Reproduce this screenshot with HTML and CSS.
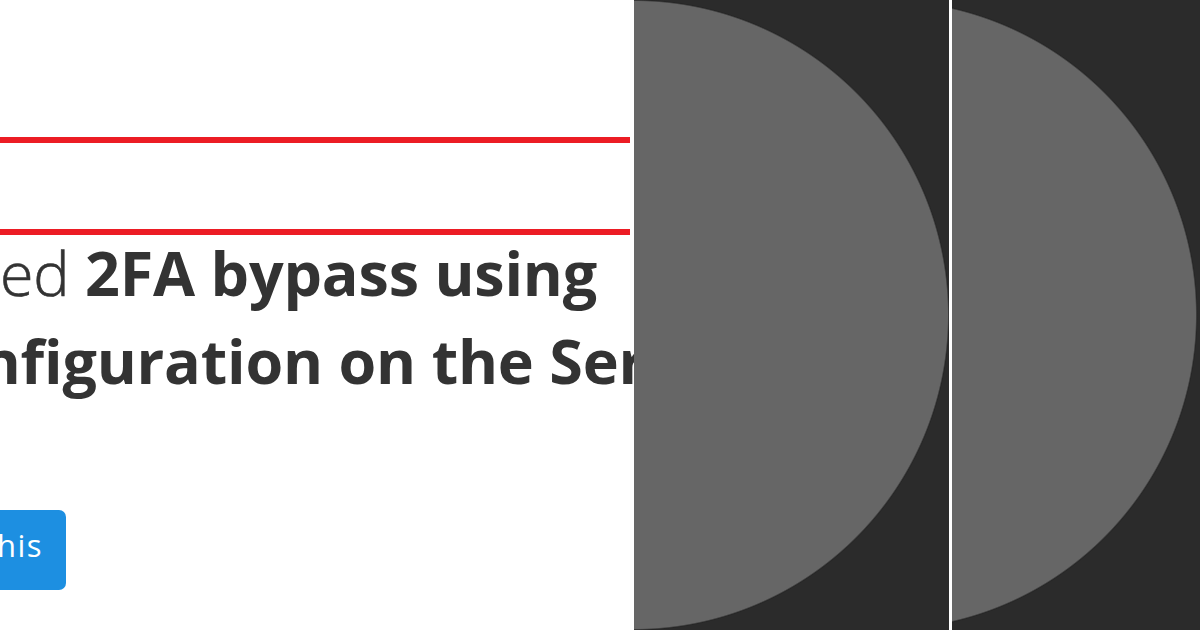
FILE: index.html
```html
<!DOCTYPE html>
<html lang="en">
<head>
<meta charset="UTF-8">
<title>2FA bypass using misconfiguration</title>
<link rel="stylesheet" href="styles.css">
</head>
<body>

<div class="article">
    <div class="rule first"></div>
    <div class="rule second"></div>

    <h1 class="title">
        <span class="line one"><span class="light">ed</span> 2FA bypass using</span>
        <span class="line two">configuration on the Server</span>
    </h1>

    <button class="share">Share this</button>
</div>

<div class="panel left"></div>
<div class="divider"></div>
<div class="panel right"></div>

</body>
</html>
```

FILE: styles.css
```css
body {
    margin: 0;
    width: 1200px;
    height: 630px;
    display: flex;
    overflow: hidden;
    background: #2b2b2b;
    font-family: 'Open Sans', 'Noto Sans', sans-serif;
}

/* Article side */
.article {
    width: 634px;
    flex-shrink: 0;
    background: #fff;
    overflow: hidden;
    padding-right: 4px;
    box-sizing: border-box;
}

.rule {
    height: 6px;
    background: #ec1c24;
}

.rule.first {
    margin-top: 137px;
}

.rule.second {
    margin-top: 86px;
}

.title {
    margin: -6px 0 0;
    font-size: 61px;
    line-height: 88px;
    font-weight: 700;
    color: #333;
    white-space: nowrap;
    letter-spacing: -0.2px;
}

.line {
    display: block;
}

.line.two {
    margin-left: -88px;
}

.light {
    font-weight: 300;
    -webkit-text-stroke: 0.6px #333;
}

/* Share button */
.share {
    display: block;
    margin: 105px 0 0 -136px;
    padding: 15px 23px 25px 20px;
    height: 80px;
    border: none;
    border-radius: 7px;
    background: #1d8fe1;
    color: #fff;
    font-family: inherit;
    font-size: 31px;
    line-height: 40px;
    letter-spacing: 1.5px;
}

/* Preview panels */
.panel {
    height: 630px;
}

.panel.left {
    width: 315px;
    flex-shrink: 0;
    background: radial-gradient(circle 316px at 0 50%, #666 313.5px, #262626 315px, #2b2b2b 316px);
}

.divider {
    width: 3px;
    flex-shrink: 0;
    background: #fff;
}

.panel.right {
    flex: 1;
    background: radial-gradient(circle 316px at -70px 50%, #666 313.5px, #262626 315px, #2b2b2b 316px);
}
```
